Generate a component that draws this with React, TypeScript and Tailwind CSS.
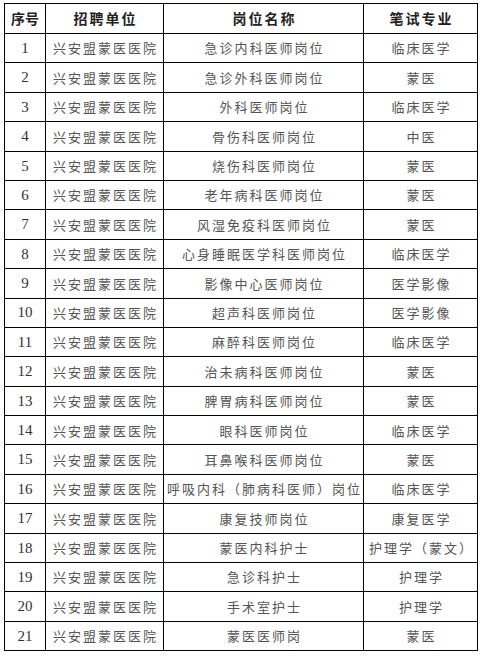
export default function App() {
  // 岗位列表
  const rows = [
    ["兴安盟蒙医医院", "急诊内科医师岗位", "临床医学"],
    ["兴安盟蒙医医院", "急诊外科医师岗位", "蒙医"],
    ["兴安盟蒙医医院", "外科医师岗位", "临床医学"],
    ["兴安盟蒙医医院", "骨伤科医师岗位", "中医"],
    ["兴安盟蒙医医院", "烧伤科医师岗位", "蒙医"],
    ["兴安盟蒙医医院", "老年病科医师岗位", "蒙医"],
    ["兴安盟蒙医医院", "风湿免疫科医师岗位", "蒙医"],
    ["兴安盟蒙医医院", "心身睡眠医学科医师岗位", "临床医学"],
    ["兴安盟蒙医医院", "影像中心医师岗位", "医学影像"],
    ["兴安盟蒙医医院", "超声科医师岗位", "医学影像"],
    ["兴安盟蒙医医院", "麻醉科医师岗位", "临床医学"],
    ["兴安盟蒙医医院", "治未病科医师岗位", "蒙医"],
    ["兴安盟蒙医医院", "脾胃病科医师岗位", "蒙医"],
    ["兴安盟蒙医医院", "眼科医师岗位", "临床医学"],
    ["兴安盟蒙医医院", "耳鼻喉科医师岗位", "蒙医"],
    ["兴安盟蒙医医院", "呼吸内科（肺病科医师）岗位", "临床医学"],
    ["兴安盟蒙医医院", "康复技师岗位", "康复医学"],
    ["兴安盟蒙医医院", "蒙医内科护士", "护理学（蒙文）"],
    ["兴安盟蒙医医院", "急诊科护士", "护理学"],
    ["兴安盟蒙医医院", "手术室护士", "护理学"],
    ["兴安盟蒙医医院", "蒙医医师岗", "蒙医"],
  ];

  const cell = "border border-black text-center align-middle p-0 whitespace-nowrap";
  const cjk = "font-['Noto_Sans_CJK_SC',sans-serif]";

  return (
    <div className="w-[481px] h-[661px] bg-white pt-[3px] pl-[4px]">
      <table className="border-collapse border-[1.5px] border-black table-fixed w-[473px]">
        <colgroup>
          <col className="w-[41px]" />
          <col className="w-[118px]" />
          <col className="w-[200px]" />
          <col className="w-[114px]" />
        </colgroup>
        <thead>
          <tr className={`h-[30px] text-[14px] font-bold text-[#222] ${cjk}`}>
            <th className={cell}>序号</th>
            <th className={`${cell} tracking-[2px] pl-[2px]`}>招聘单位</th>
            <th className={`${cell} tracking-[2px] pl-[2px]`}>岗位名称</th>
            <th className={`${cell} tracking-[2px] pl-[2px]`}>笔试专业</th>
          </tr>
        </thead>
        <tbody>
          {rows.map((r, i) => (
            <tr key={i} className="h-[29.4px]">
              <td className={`${cell} font-['Liberation_Serif',serif] text-[15px] text-[#333]`}>{i + 1}</td>
              <td className={`${cell} ${cjk} text-[13px] tracking-[2px] pl-[2px] text-[#555]`}>{r[0]}</td>
              <td className={`${cell} ${cjk} text-[13px] tracking-[2px] pl-[2px] text-[#555]`}>{r[1]}</td>
              <td className={`${cell} ${cjk} text-[13px] tracking-[2px] pl-[2px] text-[#555]`}>{r[2]}</td>
            </tr>
          ))}
        </tbody>
      </table>
    </div>
  );
}
